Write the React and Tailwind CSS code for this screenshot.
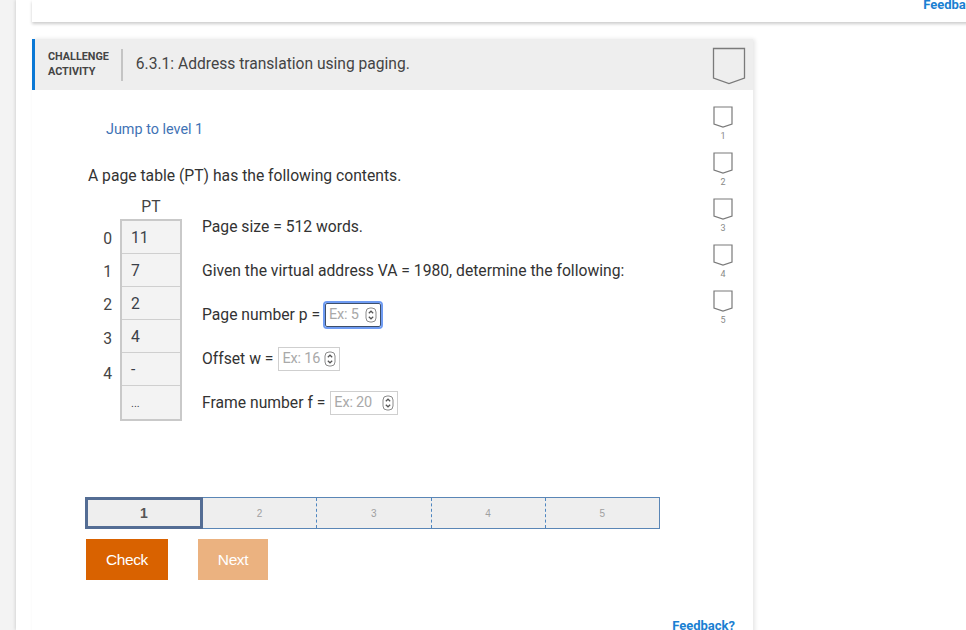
import React from "react";

function Shield({ big = false }) {
  // outlined pentagon badge used for level progress
  if (big) {
    return (
      <svg width="34" height="38" viewBox="0 0 34 38" className="block">
        <path d="M1.5 1.5 H32.5 V31 L17 36.5 L1.5 31 Z" fill="none" stroke="#7a7a7a" strokeWidth="1.3" />
      </svg>
    );
  }
  return (
    <svg width="20" height="22" viewBox="0 0 20 22" className="block">
      <path d="M1 1 H19 V18 L10 21 L1 18 Z" fill="none" stroke="#7a7a7a" strokeWidth="1.2" />
    </svg>
  );
}

function Spinner() {
  return (
    <svg width="12" height="16" viewBox="0 0 12 16" className="block shrink-0">
      <rect x="1" y="1" width="10" height="14" rx="4" fill="none" stroke="#8a8a8a" strokeWidth="1" />
      <path d="M3.8 6.3 L6 4.2 L8.2 6.3" fill="none" stroke="#555" strokeWidth="1.2" />
      <path d="M3.8 9.7 L6 11.8 L8.2 9.7" fill="none" stroke="#555" strokeWidth="1.2" />
    </svg>
  );
}

function NumberInput({ placeholder, width, focused }) {
  return (
    <div
      className={`flex items-center justify-between h-[24px] pl-[3px] pr-[3px] bg-white ${width} ${
        focused
          ? "outline outline-2 outline-[#6f9cf3] rounded-[2px] border border-[#3d4f6b]"
          : "border border-[#cfcfcf]"
      }`}
    >
      <span className="text-[14.5px] text-[#a9a9a9] leading-none tracking-[-0.2px]">{placeholder}</span>
      <Spinner />
    </div>
  );
}

export default function App() {
  const rows = ["11", "7", "2", "4", "-", "..."];
  const levels = ["2", "3", "4", "5"];

  return (
    <div
      className="h-[630px] overflow-hidden bg-[#f3f3f3] flex"
      style={{ fontFamily: "Roboto, 'Liberation Sans', sans-serif" }}
    >
      <div className="w-[16px] shrink-0" />
      <div className="flex-1 bg-white shadow-[-1px_0_3px_rgba(0,0,0,0.12)] pl-[16px] overflow-hidden">
        {/* top bar */}
        <div className="w-[970px] h-[22px] bg-white shadow-[0_2px_3px_rgba(0,0,0,0.2)] flex justify-end pr-[16px]">
          <span className="text-[13px] font-bold text-[#1a7fd2] leading-none -mt-[2px]">Feedback?</span>
        </div>

        {/* activity card */}
        <div className="mt-[17px] w-[721px] h-[600px] bg-white shadow-[2px_0_4px_rgba(0,0,0,0.1)]">
          {/* header */}
          <div className="h-[51px] bg-[#eeeeee] border-l-[3px] border-[#0a78d5] flex items-center pl-[13px] pr-[8px]">
            <div className="text-[10.8px] font-bold text-[#444] leading-[15px] -mt-[1px]">
              CHALLENGE
              <br />
              ACTIVITY
            </div>
            <div className="w-[2px] h-[32px] bg-[#c4c4c4] ml-[12px] mr-[13px]" />
            <div className="text-[15.6px] text-[#444]">6.3.1: Address translation using paging.</div>
            <div className="ml-auto -mr-[1px] mt-[2px]">
              <Shield big />
            </div>
          </div>

          <div className="flex">
            {/* main body */}
            <div className="flex-1 pl-[53px]">
              <div className="pl-[21px] pt-[31px] text-[14.4px] text-[#3f73b5] leading-[18px]">Jump to level 1</div>
              <div className="pl-[3px] mt-[28px] text-[15.7px] text-[#333] leading-[18px]">
                A page table (PT) has the following contents.
              </div>

              <div className="flex mt-[13px] pl-[3px]">
                {/* PT table */}
                <div className="flex">
                  <div className="w-[32px] pt-[23px] flex flex-col">
                    {rows.slice(0, 5).map((r, i) => (
                      <div key={i} className="h-[33.4px] flex items-center justify-end pr-[8px] text-[15.7px] text-[#444]">
                        <span className={i === 4 ? "mt-[5px]" : i === 0 ? "mt-[3px]" : "mt-[1px]"}>{i}</span>
                      </div>
                    ))}
                  </div>
                  <div className="flex flex-col">
                    <div className="h-[21px] text-center text-[15.7px] text-[#444] leading-[18px]">PT</div>
                    <div className="w-[62px] border-2 border-[#c9c9c9] bg-[#f3f3f3]">
                      {rows.map((r, i) => (
                        <div
                          key={i}
                          className={`h-[33px] flex items-center pl-[9px] text-[#3a3f48] ${
                            i < rows.length - 1 ? "border-b border-[#cfcfcf]" : ""
                          } ${i === rows.length - 1 ? "text-[11px] pl-[7px] pt-[4px]" : "text-[15.7px] pt-[2px]"}`}
                        >
                          {r}
                        </div>
                      ))}
                    </div>
                  </div>
                </div>

                {/* questions */}
                <div className="ml-[20px] pt-[20px] flex flex-col gap-[26px] text-[15.7px] text-[#333] leading-[18px]">
                  <div>Page size = 512 words.</div>
                  <div>Given the virtual address VA = 1980, determine the following:</div>
                  <div className="flex items-center gap-[5px] h-[18px]">
                    <span>Page number p =</span>
                    <NumberInput placeholder="Ex: 5" width="w-[56px]" focused />
                  </div>
                  <div className="flex items-center gap-[5px] h-[18px]">
                    <span>Offset w =</span>
                    <NumberInput placeholder="Ex: 16" width="w-[62px]" />
                  </div>
                  <div className="flex items-center gap-[5px] h-[18px]">
                    <span>Frame number f =</span>
                    <NumberInput placeholder="Ex: 20" width="w-[68px]" />
                  </div>
                </div>
              </div>

              {/* progress */}
              <div className="mt-[76px] flex h-[32px] w-[575px]" style={{ fontFamily: "'Liberation Sans', Arial, sans-serif" }}>
                <div className="w-[118px] border-[3px] border-[#546d94] bg-[#eeeeee] flex items-center justify-center text-[14px] font-bold text-[#555]">
                  1
                </div>
                <div className="flex-1 flex border border-l-0 border-[#5a86b6] bg-[#eeeeee]">
                  {levels.map((l, i) => (
                    <div
                      key={l}
                      className={`flex-1 flex items-center justify-center text-[10px] text-[#a0a0a0] ${
                        i < levels.length - 1 ? "border-r border-dashed border-[#4e86c0]" : ""
                      }`}
                    >
                      {l}
                    </div>
                  ))}
                </div>
              </div>

              {/* buttons */}
              <div className="flex gap-[30px] mt-[10px] pl-[1px]" style={{ fontFamily: "'Liberation Sans', Arial, sans-serif" }}>
                <button className="w-[82px] h-[41px] bg-[#d96200] text-white text-[15.5px] tracking-[-0.4px]">Check</button>
                <button className="w-[70px] h-[41px] bg-[#ebb280] text-white text-[15.5px] tracking-[-0.4px]">Next</button>
              </div>
            </div>

            {/* level sidebar */}
            <div className="w-[44px] mr-[8px] flex flex-col items-center pt-[16px]">
              {["1", "2", "3", "4", "5"].map((n) => (
                <div key={n} className="flex flex-col items-center h-[46px]">
                  <Shield />
                  <span className="text-[9px] text-[#888] mt-[4px] leading-none">{n}</span>
                </div>
              ))}
            </div>
          </div>

          <div className="flex justify-end pr-[18px] mt-[36px]">
            <span className="text-[13px] font-bold text-[#1a7fd2]">Feedback?</span>
          </div>
        </div>
      </div>
    </div>
  );
}
